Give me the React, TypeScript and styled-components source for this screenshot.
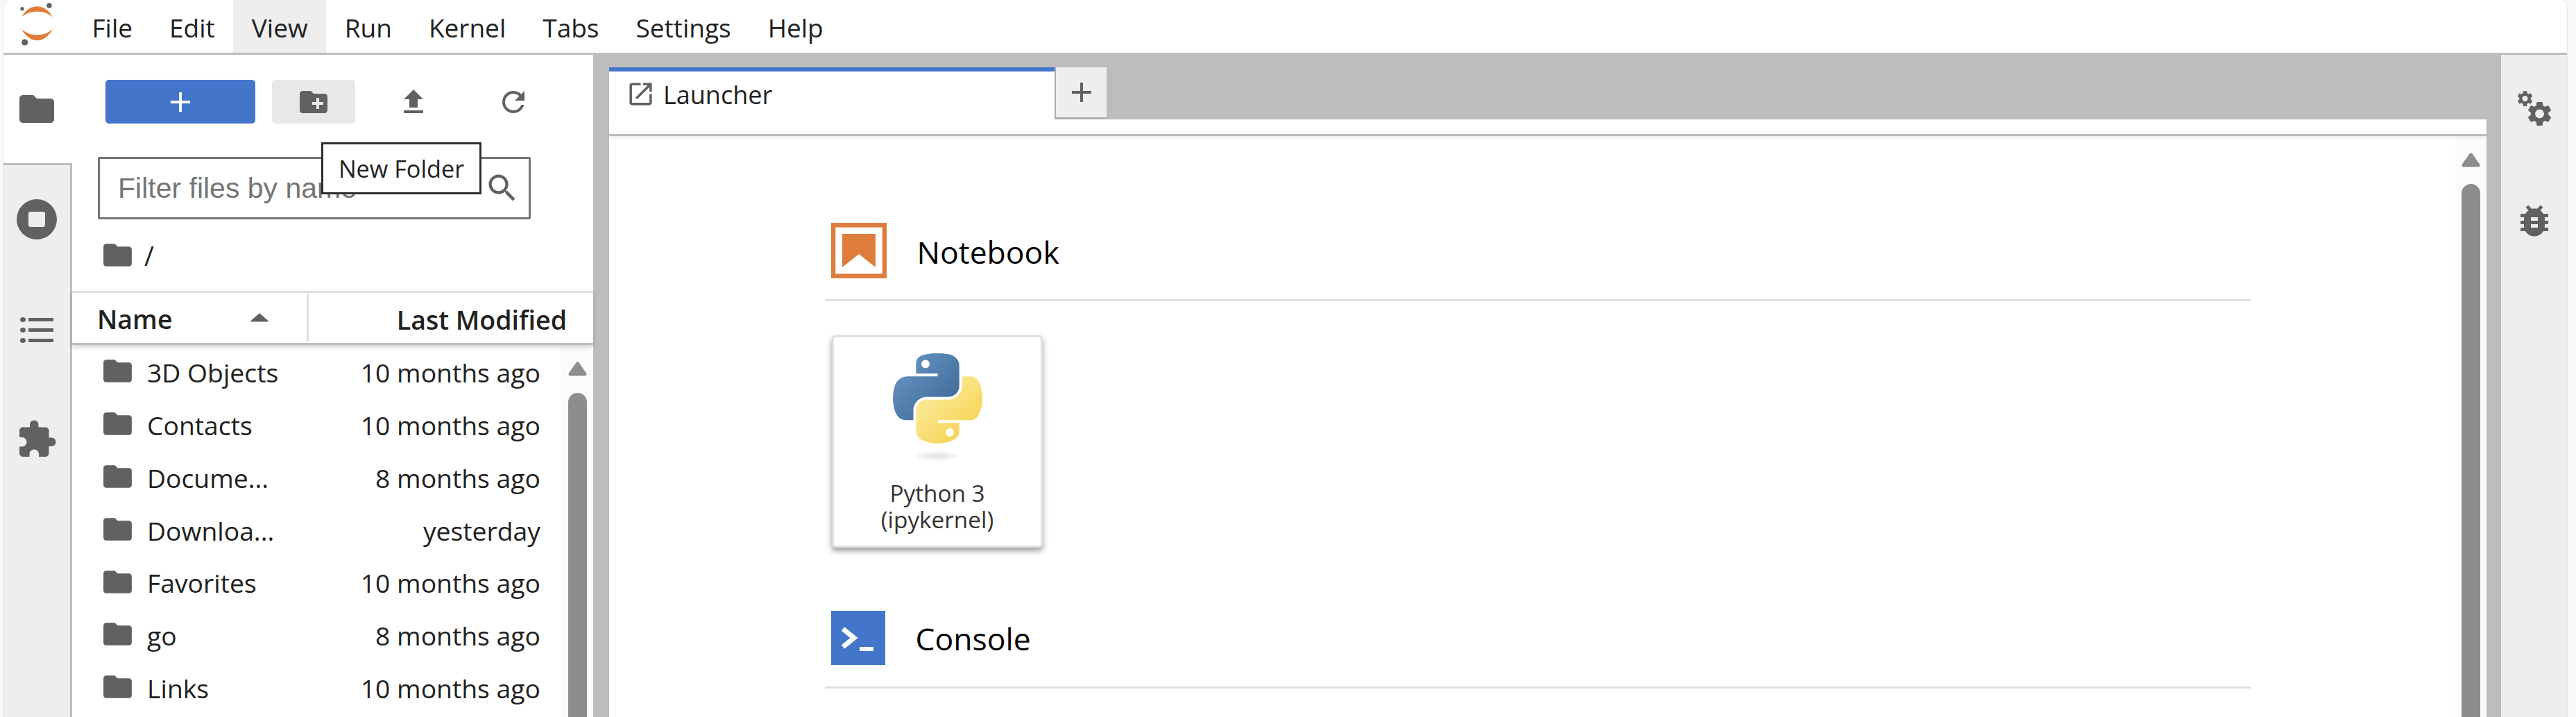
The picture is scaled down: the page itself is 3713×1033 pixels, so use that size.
import React from "react";
import styled, { createGlobalStyle } from "styled-components";

const Global = createGlobalStyle`
  html, body { margin: 0; padding: 0; height: 1033px; overflow: hidden; background: #f8f8f8; }
  * { box-sizing: border-box; }
  #root { height: 1033px; }
`;

const UI = `"Open Sans", "Noto Sans", sans-serif`;

const Frame = styled.div`
  margin: 0 12px 0 4px;
  height: 1033px;
  display: flex;
  flex-direction: column;
  background: #fff;
  border: solid #e6e6e6;
  border-width: 0 1px;
  border-radius: 12px 12px 0 0;
  overflow: hidden;
  font-family: ${UI};
  font-weight: 380;
  color: #212121;
`;

const MenuBar = styled.header`
  height: 79px;
  flex: none;
  display: flex;
  background: #fff;
  border-bottom: 3px solid #bdbdbd;
`;
const LogoBox = styled.div`
  width: 101px;
  flex: none;
  display: flex;
`;
const MenuItem = styled.div<{ $hover?: boolean }>`
  height: 76px;
  padding: 3px 26.5px 0;
  display: flex;
  align-items: center;
  font-size: 37px;
  line-height: 1;
  background: ${(p) => (p.$hover ? "#eeeeee" : "transparent")};
`;

const Body = styled.div`
  flex: 1;
  min-height: 0;
  display: flex;
  position: relative;
`;

const ActivityBar = styled.nav<{ $side?: "left" | "right" }>`
  flex: none;
  background: #eeeeee;
  border-right: ${(p) => (p.$side === "right" ? "0" : "3px solid #bdbdbd")};
  width: ${(p) => (p.$side === "right" ? "96px" : "99px")};
`;
const ActivityTab = styled.div<{ $active?: boolean; $belowActive?: boolean; $raise?: number }>`
  height: ${(p) => (p.$active ? 156 : 159)}px;
  width: ${(p) => (p.$active ? "99px" : "96px")};
  padding-right: ${(p) => (p.$active ? "3px" : "0")};
  padding-bottom: ${(p) => p.$raise ?? 0}px;
  position: relative;
  display: flex;
  align-items: center;
  justify-content: center;
  background: ${(p) => (p.$active ? "#fff" : "transparent")};
  border-top: ${(p) => (p.$belowActive ? "3px solid #bdbdbd" : "0")};
`;

const SidePanel = styled.aside`
  width: 751px;
  flex: none;
  display: flex;
  flex-direction: column;
  position: relative;
  background: #fff;
`;
const Toolbar = styled.div`
  display: flex;
  gap: 24px;
  padding: 36px 0 0 48px;
  flex: none;
`;
const PrimaryButton = styled.button`
  width: 216px;
  height: 63px;
  padding: 0;
  border: 0;
  border-radius: 5px;
  background: #4375ca;
  display: flex;
  align-items: center;
  justify-content: center;
`;
const ToolButton = styled.button<{ $hover?: boolean }>`
  width: 120px;
  height: 63px;
  padding: 0;
  border: 0;
  border-radius: 5px;
  background: ${(p) => (p.$hover ? "#e8e8e8" : "transparent")};
  display: flex;
  align-items: center;
  justify-content: center;
`;
const SearchBox = styled.div`
  margin: 48px 0 0 37px;
  width: 624px;
  height: 90px;
  flex: none;
  display: flex;
  align-items: center;
  border: 3px solid #757575;
  border-radius: 2px;
  padding: 0 12px 0 26px;
`;
const SearchInput = styled.input`
  flex: 1;
  min-width: 0;
  border: 0;
  outline: 0;
  padding: 0;
  background: transparent;
  font-family: "Liberation Sans", Arial, sans-serif;
  font-size: 41px;
  &::placeholder { color: #757575; opacity: 1; }
`;
const Crumbs = styled.div`
  height: 103px;
  flex: none;
  display: flex;
  align-items: center;
  gap: 14px;
  padding-left: 41px;
  font-size: 38px;
`;
const ListHeader = styled.div`
  height: 78px;
  flex: none;
  display: flex;
  border-top: 3px solid #e0e0e0;
  border-bottom: 3px solid #bdbdbd;
  box-shadow: 0 3px 6px rgba(0, 0, 0, 0.18);
  position: relative;
  z-index: 1;
  font-size: 37.5px;
  font-weight: 540;
  background: #fff;
`;
const NameHead = styled.div`
  width: 341px;
  flex: none;
  display: flex;
  align-items: center;
  justify-content: space-between;
  padding: 0 55px 0 36px;
  border-right: 3px solid #e0e0e0;
  margin: 1px 0 2px;
`;
const HeadText = styled.span`
  padding-top: 4px;
`;
const ModifiedHead = styled.div`
  flex: 1;
  display: flex;
  align-items: center;
  justify-content: flex-end;
  padding-right: 38px;
`;
const ListArea = styled.div`
  flex: 1;
  min-height: 0;
  display: flex;
`;
const Rows = styled.div`
  flex: 1;
  min-width: 0;
  overflow: hidden;
`;
const Row = styled.div`
  height: 75.8px;
  display: flex;
  align-items: center;
  padding: 0 30px 0 41px;
  font-size: 37.3px;
  line-height: 1;
`;
const RowName = styled.span`
  margin-left: 18px;
  padding-top: 4px;
  flex: 1;
`;
const RowDate = styled.span`
  flex: none;
  padding-top: 4px;
`;
const Track = styled.div<{ $width: number }>`
  width: ${(p) => p.$width}px;
  flex: none;
  background: #fbfbfb;
  display: flex;
  flex-direction: column;
  align-items: center;
  padding-top: 24px;
`;
const Thumb = styled.div`
  width: 27px;
  flex: 1;
  margin-top: 24px;
  background: #8d8d8d;
  border-radius: 14px 14px 0 0;
`;
const Tooltip = styled.div`
  position: absolute;
  left: 359px;
  top: 126px;
  height: 75px;
  width: 231px;
  display: flex;
  align-items: center;
  justify-content: center;
  border: 3px solid #2e2e2e;
  background: #fff;
  font-size: 34.2px;
  z-index: 5;
`;

const Splitter = styled.div<{ $w: number }>`
  width: ${(p) => p.$w}px;
  flex: none;
  background: #bdbdbd;
`;

const Main = styled.main`
  width: 2706px;
  flex: none;
  display: flex;
  flex-direction: column;
`;
const TabBar = styled.div`
  height: 93px;
  flex: none;
  display: flex;
  align-items: flex-start;
  padding-top: 18px;
  background: #bdbdbd;
`;
const Tab = styled.div`
  width: 642px;
  height: 96px;
  flex: none;
  position: relative;
  z-index: 1;
  display: flex;
  align-items: flex-start;
  gap: 11px;
  padding: 0 0 0 24px;
  border-top: 6px solid #4375ca;
  background: #fff;
  font-size: 36px;
`;
const TabLabel = styled.span`
  line-height: 68px;
`;
const TabIcon = styled.span`
  display: flex;
  align-items: center;
  height: 64px;
`;
const AddTab = styled.button`
  width: 75px;
  height: 75px;
  padding: 0;
  flex: none;
  border: solid #adadad;
  border-width: 0 0 3px 2px;
  background: #eeeeee;
  display: flex;
  align-items: center;
  justify-content: center;
`;
const TabStrip = styled.div`
  height: 24px;
  flex: none;
  background: #fff;
  border-bottom: 3px solid #bdbdbd;
  box-shadow: 0 2px 4px rgba(0, 0, 0, 0.1);
  position: relative;
`;
const LauncherArea = styled.div`
  flex: 1;
  min-height: 0;
  display: flex;
  background: #fff;
`;
const LauncherBody = styled.div`
  flex: 1;
  min-width: 0;
  padding: 125px 0 0 311px;
  overflow: hidden;
`;
const Section = styled.section`
  width: 2055px;
`;
const SectionHead = styled.div<{ $after: number }>`
  display: flex;
  align-items: center;
  gap: 46px;
  padding: 0 0 ${(p) => p.$after}px 8.5px;
  border-bottom: 3px solid #e0e0e0;
  font-size: 44.5px;
  line-height: 1;
  color: #000;
`;
const SectionTitle = styled.span<{ $shift: number }>`
  padding-top: ${(p) => p.$shift}px;
  margin-left: -2px;
`;
const Card = styled.div`
  width: 304px;
  height: 306px;
  margin: 49px 0 91px 10px;
  border: 3px solid #e0e0e0;
  border-radius: 5px;
  box-shadow: 0 5px 8px rgba(0, 0, 0, 0.38);
  background: #fff;
  display: flex;
  flex-direction: column;
  align-items: center;
  padding-top: 23px;
`;
const CardLabel = styled.div`
  margin-top: 26px;
  font-size: 33.3px;
  line-height: 38px;
  text-align: center;
  color: #333;
`;

const Icon = ({ d, size, color = "#616161" }: { d: string; size: number; color?: string }) => (
  <svg width={size} height={size} viewBox="0 0 24 24" fill={color} fillRule="evenodd" style={{ flex: "none", display: "block" }}>
    <path d={d} />
  </svg>
);

const FOLDER = "M10 4H4c-1.1 0-1.99.9-1.99 2L2 18c0 1.1.9 2 2 2h16c1.1 0 2-.9 2-2V8c0-1.1-.9-2-2-2h-8l-2-2z";
const NEW_FOLDER = "M20 6h-8l-2-2H4c-1.1 0-1.99.9-1.99 2L2 18c0 1.1.9 2 2 2h16c1.1 0 2-.9 2-2V8c0-1.1-.9-2-2-2zm-1 8h-3v3h-2v-3h-3v-2h3V9h2v3h3v2z";
const UPLOAD = "M9 16h6v-6h4l-7-7-7 7h4zm-4 2h14v2H5z";
const REFRESH = "M17.65 6.35C16.2 4.9 14.21 4 12 4c-4.42 0-7.99 3.58-7.99 8s3.57 8 7.99 8c3.73 0 6.84-2.55 7.73-6h-2.08c-.82 2.33-3.04 4-5.65 4-3.31 0-6-2.69-6-6s2.69-6 6-6c1.66 0 3.14.69 4.22 1.78L13 11h7V4l-2.35 2.35z";
const SEARCH = "M15.5 14h-.79l-.28-.27C15.41 12.59 16 11.11 16 9.5 16 5.91 13.09 3 9.5 3S3 5.91 3 9.5 5.91 16 9.5 16c1.61 0 3.09-.59 4.23-1.57l.27.28v.79l5 4.99L20.49 19l-4.99-5zm-6 0C7.01 14 5 11.99 5 9.5S7.01 5 9.5 5 14 7.01 14 9.5 11.99 14 9.5 14z";
const OPEN = "M19 19H5V5h7V3H5c-1.11 0-2 .9-2 2v14c0 1.1.89 2 2 2h14c1.1 0 2-.9 2-2v-7h-2v7zM14 3v2h3.59l-9.83 9.83 1.41 1.41L19 6.41V10h2V3h-7z";
const PUZZLE = "M20.5 11H19V7c0-1.1-.9-2-2-2h-4V3.5C13 2.12 11.88 1 10.5 1S8 2.12 8 3.5V5H4c-1.1 0-1.99.9-1.99 2v3.8H3.5c1.49 0 2.7 1.21 2.7 2.7s-1.21 2.7-2.7 2.7H2V20c0 1.1.9 2 2 2h3.8v-1.5c0-1.49 1.21-2.7 2.7-2.7 1.49 0 2.7 1.21 2.7 2.7V22H17c1.1 0 2-.9 2-2v-4h1.5c1.38 0 2.5-1.12 2.5-2.5S21.88 11 20.5 11z";
const BUG = "M20 8h-2.81c-.45-.78-1.07-1.45-1.82-1.96L17 4.41 15.59 3l-2.17 2.17C12.96 5.06 12.49 5 12 5c-.49 0-.96.06-1.41.17L8.41 3 7 4.41l1.62 1.63C7.88 6.55 7.26 7.22 6.81 8H4v2h2.09c-.05.33-.09.66-.09 1v1H4v2h2v1c0 .34.04.67.09 1H4v2h2.81c1.04 1.79 2.97 3 5.19 3s4.15-1.21 5.19-3H20v-2h-2.09c.05-.33.09-.66.09-1v-1h2v-2h-2v-1c0-.34-.04-.67-.09-1H20V8zm-6 8h-4v-2h4v2zm0-4h-4v-2h4v2z";
const GEAR = "M19.14 12.94c.04-.3.06-.61.06-.94 0-.32-.02-.64-.07-.94l2.03-1.58c.18-.14.23-.41.12-.61l-1.92-3.32c-.12-.22-.37-.29-.59-.22l-2.39.96c-.5-.38-1.03-.7-1.62-.94l-.36-2.54c-.04-.24-.24-.41-.48-.41h-3.84c-.24 0-.43.17-.47.41l-.36 2.54c-.59.24-1.13.57-1.62.94l-2.39-.96c-.22-.08-.47 0-.59.22L2.74 8.87c-.12.21-.08.47.12.61l2.03 1.58c-.05.3-.09.63-.09.94s.02.64.07.94l-2.03 1.58c-.18.14-.23.41-.12.61l1.92 3.32c.12.22.37.29.59.22l2.39-.96c.5.38 1.03.7 1.62.94l.36 2.54c.05.24.24.41.48.41h3.84c.24 0 .44-.17.47-.41l.36-2.54c.59-.24 1.13-.56 1.62-.94l2.39.96c.22.08.47 0 .59-.22l1.92-3.32c.12-.22.07-.47-.12-.61l-2.01-1.58zM12 15.6c-1.98 0-3.6-1.62-3.6-3.6s1.62-3.6 3.6-3.6 3.6 1.62 3.6 3.6-1.62 3.6-3.6 3.6z";

const Logo = () => (
  <svg width={101} height={76} viewBox="5 0 101 76">
    <path fill="#e17d39" d="M31 24.5C37 14 45 9.3 53.5 9.3S70 14 76 24.5C69 19 62 16.8 53.5 16.8S38 19 31 24.5Z" />
    <path fill="#e17d39" d="M31 42C37 52.5 45 58.3 53.5 58.3S70 52.5 76 42C69 48 62 50.3 53.5 50.3S38 48 31 42Z" />
    <circle cx="71" cy="8" r="3.7" fill="#616161" />
    <circle cx="32" cy="12.8" r="2.7" fill="#616161" />
    <circle cx="35.7" cy="61" r="4.6" fill="#616161" />
  </svg>
);

const PlusGlyph = ({ color, w = 4 }: { color: string; w?: number }) => (
  <svg width={28} height={28} viewBox="0 0 28 28" style={{ display: "block" }}>
    <path d={`M14 0V28M0 14H28`} stroke={color} strokeWidth={w} fill="none" />
  </svg>
);

const StopIcon = () => (
  <svg width={58} height={58} viewBox="0 0 58 58" style={{ display: "block" }}>
    <circle cx="29" cy="29" r="29" fill="#616161" />
    <rect x="17" y="18" width="24" height="22" rx="3" fill="#eeeeee" />
  </svg>
);

const ListIcon = () => (
  <svg width={48} height={37} viewBox="0 0 48 37" style={{ display: "block", marginTop: 3 }}>
    {[3.5, 18.5, 33.5].map((y) => (
      <g key={y} fill="#616161">
        <ellipse cx="4" cy={y} rx="4" ry="3.5" />
        <rect x="12" y={y - 2.5} width="36" height="5" />
      </g>
    ))}
  </svg>
);

const GearsIcon = () => (
  <svg width={50} height={51} viewBox="0 0 50 51" fill="#616161" fillRule="evenodd" style={{ display: "block" }}>
    <path transform="translate(-2 -2.5) scale(1.13)" d={GEAR} />
    <path transform="translate(11.3 11.7) scale(1.77)" d={GEAR} />
  </svg>
);

const UpArrow = ({ w, h, color, stroke = 5 }: { w: number; h: number; color: string; stroke?: number }) => {
  const inset = stroke / 2 + 0.5;
  return (
    <svg width={w} height={h} viewBox={`0 0 ${w} ${h}`} style={{ display: "block", flex: "none" }}>
      <path d={`M${w / 2} ${inset}L${w - inset} ${h - inset}H${inset}Z`} fill={color} stroke={color} strokeWidth={stroke} strokeLinejoin="round" />
    </svg>
  );
};

const PythonIcon = () => (
  <svg width={129} height={156} viewBox="0 0 129 156" style={{ display: "block" }}>
    <defs>
      <linearGradient id="pyB" x1="0" y1="0" x2="1" y2="1">
        <stop offset="0" stopColor="#6a99c8" />
        <stop offset="1" stopColor="#3a6391" />
      </linearGradient>
      <linearGradient id="pyY" x1="0.3" y1="0.3" x2="0.8" y2="0.85">
        <stop offset="0" stopColor="#fae88f" />
        <stop offset="1" stopColor="#f6d252" />
      </linearGradient>
      <radialGradient id="pyS">
        <stop offset="0" stopColor="#000" stopOpacity="0.12" />
        <stop offset="1" stopColor="#000" stopOpacity="0" />
      </radialGradient>
    </defs>
    <g transform="scale(1.163 1.158)">
      <path fill="url(#pyB)" d="M54.918785,9.1927421e-4 C50.335132,0.02221727 45.957846,0.41313697 42.106285,1.0946693 C30.760069,3.0991731 28.700036,7.2947714 28.700035,15.032169 L28.700035,25.250919 L55.512535,25.250919 L55.512535,28.657169 L28.700035,28.657169 L18.637535,28.657169 C10.845076,28.657169 4.0217762,33.340886 1.8875352,42.250919 C-0.57428478,52.463475 -0.68347919,58.832853 1.8875352,69.500919 C3.7934635,77.441315 8.3450353,83.094669 16.137535,83.094669 L25.356285,83.094669 L25.356285,70.844669 C25.356285,61.994815 33.013429,54.188419 42.106285,54.188419 L68.887535,54.188419 C76.342486,54.188419 82.293788,48.050311 82.293785,40.563419 L82.293785,15.032169 C82.293785,7.7658345 76.163805,2.3073033 68.887535,1.0946693 C64.281548,0.32794397 59.502438,-0.02037903 54.918785,9.1927421e-4 z M40.418785,8.2184041 C43.188335,8.2184041 45.450035,10.517036 45.450035,13.343419 C45.450034,16.159818 43.188335,18.437169 40.418785,18.437169 C37.639339,18.437169 35.387535,16.159818 35.387535,13.343419 C35.387534,10.517036 37.639339,8.2184041 40.418785,8.2184041 z" />
      <path fill="url(#pyY)" d="M85.637535,28.657169 L85.637535,40.563419 C85.637535,49.794165 77.811336,57.563419 68.887535,57.563419 L42.106285,57.563419 C34.770396,57.563419 28.700035,63.841969 28.700035,71.188419 L28.700035,96.719669 C28.700035,103.98599 35.018576,108.25979 42.106285,110.34417 C50.593521,112.83977 58.732952,113.29082 68.887535,110.34417 C75.637303,108.38987 82.293785,104.45682 82.293785,96.719669 L82.293785,86.500919 L55.512535,86.500919 L55.512535,83.094669 L82.293785,83.094669 L95.699035,83.094669 C103.49149,83.094669 106.39521,77.659279 109.10529,69.500919 C111.90464,61.102089 111.78635,53.025619 109.10529,42.250919 C107.17881,34.493069 103.49929,28.657169 95.699035,28.657169 L85.637535,28.657169 z M70.575035,93.313419 C73.354481,93.313419 75.606285,95.590771 75.606285,98.407169 C75.606284,101.23355 73.354481,103.53218 70.575035,103.53218 C67.805485,103.53218 65.543785,101.23355 65.543785,98.407169 C65.543786,95.590771 67.805485,93.313419 70.575035,93.313419 z" />
    </g>
    <ellipse cx="64.5" cy="148" rx="36" ry="8" fill="url(#pyS)" />
  </svg>
);

const NotebookIcon = () => (
  <svg width={80} height={80} viewBox="0 0 80 80" style={{ display: "block", flex: "none" }}>
    <rect x="3" y="3.3" width="74" height="73.4" fill="#fff" stroke="#de7c3b" strokeWidth="6.5" />
    <path d="M16 16H64V64L40 45L16 64Z" fill="#de7c3b" />
  </svg>
);

const ConsoleIcon = () => (
  <svg width={78} height={78} viewBox="0 0 78 78" style={{ display: "block", flex: "none" }}>
    <rect width="78" height="78" fill="#4375ca" />
    <path d="M17 26L33 39L17 52" fill="none" stroke="#fff" strokeWidth="7" />
    <rect x="41" y="52" width="20" height="6" fill="#fff" />
  </svg>
);

const files: [string, string][] = [
  ["3D Objects", "10 months ago"],
  ["Contacts", "10 months ago"],
  ["Docume...", "8 months ago"],
  ["Downloa...", "yesterday"],
  ["Favorites", "10 months ago"],
  ["go", "8 months ago"],
  ["Links", "10 months ago"],
];

const menus = ["File", "Edit", "View", "Run", "Kernel", "Tabs", "Settings", "Help"];

export default function App() {
  return (
    <>
      <Global />
      <Frame>
        <MenuBar>
          <LogoBox>
            <Logo />
          </LogoBox>
          {menus.map((m) => (
            <MenuItem key={m} $hover={m === "View"}>
              {m}
            </MenuItem>
          ))}
        </MenuBar>
        <Body>
          <ActivityBar>
            <ActivityTab $active>
              <Icon d={FOLDER} size={60} />
            </ActivityTab>
            <ActivityTab $belowActive>
              <StopIcon />
            </ActivityTab>
            <ActivityTab>
              <ListIcon />
            </ActivityTab>
            <ActivityTab>
              <Icon d={PUZZLE} size={60} />
            </ActivityTab>
          </ActivityBar>
          <SidePanel>
            <Toolbar>
              <PrimaryButton>
                <PlusGlyph color="#fff" />
              </PrimaryButton>
              <ToolButton $hover>
                <Icon d={NEW_FOLDER} size={48} />
              </ToolButton>
              <ToolButton>
                <Icon d={UPLOAD} size={48} />
              </ToolButton>
              <ToolButton>
                <Icon d={REFRESH} size={48} />
              </ToolButton>
            </Toolbar>
            <SearchBox>
              <SearchInput placeholder="Filter files by name" readOnly />
              <Icon d={SEARCH} size={52} />
            </SearchBox>
            <Crumbs>
              <Icon d={FOLDER} size={49} />
              <span>/</span>
            </Crumbs>
            <ListHeader>
              <NameHead>
                <HeadText>Name</HeadText>
                <UpArrow w={26} h={13} color="#616161" stroke={2} />
              </NameHead>
              <ModifiedHead>
                <HeadText>Last Modified</HeadText>
              </ModifiedHead>
            </ListHeader>
            <ListArea>
              <Rows>
                {files.map(([name, date]) => (
                  <Row key={name}>
                    <Icon d={FOLDER} size={49} />
                    <RowName>{name}</RowName>
                    <RowDate>{date}</RowDate>
                  </Row>
                ))}
              </Rows>
              <Track $width={46}>
                <UpArrow w={27} h={21} color="#8d8d8d" />
                <Thumb />
              </Track>
            </ListArea>
            <Tooltip>New Folder</Tooltip>
          </SidePanel>
          <Splitter $w={23} />
          <Main>
            <TabBar>
              <Tab>
                <TabIcon>
                  <Icon d={OPEN} size={43} />
                </TabIcon>
                <TabLabel>Launcher</TabLabel>
              </Tab>
              <AddTab>
                <PlusGlyph color="#616161" />
              </AddTab>
            </TabBar>
            <TabStrip />
            <LauncherArea>
              <LauncherBody>
                <Section>
                  <SectionHead $after={30}>
                    <NotebookIcon />
                    <SectionTitle $shift={4}>Notebook</SectionTitle>
                  </SectionHead>
                  <Card>
                    <PythonIcon />
                    <CardLabel>
                      Python 3
                      <br />
                      (ipykernel)
                    </CardLabel>
                  </Card>
                  <SectionHead $after={31}>
                    <ConsoleIcon />
                    <SectionTitle $shift={2}>Console</SectionTitle>
                  </SectionHead>
                </Section>
              </LauncherBody>
              <Track $width={45}>
                <UpArrow w={27} h={21} color="#8d8d8d" />
                <Thumb />
              </Track>
            </LauncherArea>
          </Main>
          <Splitter $w={21} />
          <ActivityBar $side="right">
            <ActivityTab $raise={4}>
              <GearsIcon />
            </ActivityTab>
            <ActivityTab>
              <Icon d={BUG} size={60} />
            </ActivityTab>
          </ActivityBar>
        </Body>
      </Frame>
    </>
  );
}
